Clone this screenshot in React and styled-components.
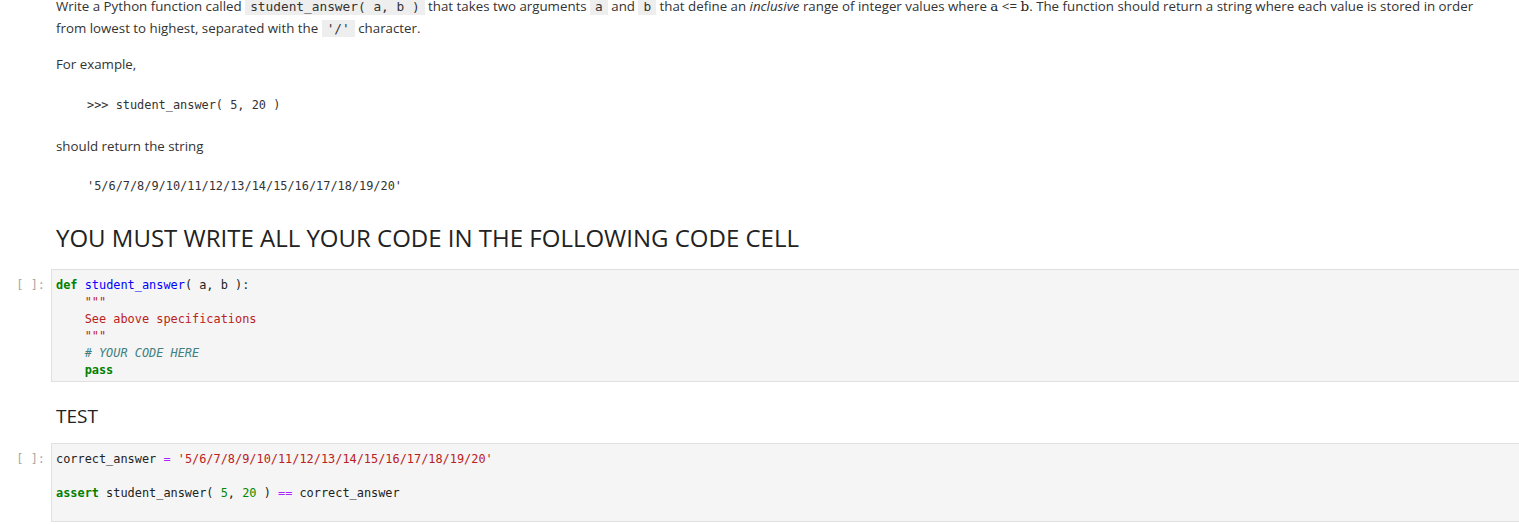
import React from 'react';
import styled, { createGlobalStyle } from 'styled-components';

const GlobalStyle = createGlobalStyle`
  html, body {
    margin: 0;
    padding: 0;
    background: #ffffff;
    overflow: hidden;
  }
`;

const Notebook = styled.div`
  width: 1560px;
  margin-top: -5px;
  font-family: "Open Sans", "Noto Sans", sans-serif;
  color: #333333;
`;

const Markdown = styled.div`
  width: 1440px;
  padding-left: 56px;
`;

const Para = styled.p`
  margin: ${props => props.top || 0}px 0 0 0;
  font-size: 13.3px;
  line-height: 22px;
`;

const InlineCode = styled.code`
  font-family: "DejaVu Sans Mono", monospace;
  font-size: 12.8px;
  line-height: 16px;
  background: #eeeeee;
  padding: 1px 5px;
  color: #333333;
`;

const MathVar = styled.span`
  font-family: "DejaVu Serif", serif;
  font-size: 13.5px;
  color: #222;
`;

const Pre = styled.pre`
  margin: ${props => props.top || 0}px 0 0 0;
  padding-left: 31px;
  font-family: "DejaVu Sans Mono", monospace;
  font-size: 11.9px;
  line-height: 17px;
  color: #333333;
`;

const Heading = styled.h2`
  margin: ${props => props.top || 0}px 0 0 56px;
  font-weight: 400;
  font-size: ${props => props.size}px;
  line-height: ${props => props.lh}px;
  color: #222222;
`;

const CellRow = styled.div`
  display: flex;
  margin-top: ${props => props.top || 0}px;
`;

const Prompt = styled.div`
  width: 51px;
  flex: none;
  box-sizing: border-box;
  padding: 8px 6px 0 0;
  text-align: right;
  font-family: "DejaVu Sans Mono", monospace;
  font-size: 11.9px;
  line-height: 17px;
  color: #a8a8a8;
  white-space: pre;
`;

const Input = styled.pre`
  flex: 1;
  margin: 0;
  padding: 7px 4px 2px 4px;
  background: #f5f5f5;
  border: 1px solid #e0e0e0;
  font-family: "DejaVu Sans Mono", monospace;
  font-size: 11.9px;
  line-height: 17px;
  color: #222222;
`;

const Kw = styled.span`
  color: #008000;
  font-weight: bold;
`;
const Def = styled.span`color: #0000ff;`;
const Str = styled.span`color: #ba2121;`;
const Comment = styled.span`
  color: #408080;
  font-style: italic;
`;
const Op = styled.span`color: #aa22ff;`;
const Num = styled.span`color: #008800;`;

export default function App() {
  return (
    <>
      <GlobalStyle />
      <Notebook>
        <Markdown>
          <Para>
            Write a Python function called <InlineCode>student_answer( a, b )</InlineCode> that takes two
            arguments <InlineCode>a</InlineCode> and <InlineCode>b</InlineCode> that define an <em>inclusive</em> range
            of integer values where <MathVar>a</MathVar> &lt;= <MathVar>b</MathVar>. The function should return a string
            where each value is stored in order from lowest to highest, separated with the{' '}
            <InlineCode>'/'</InlineCode> character.
          </Para>
          <Para top={14}>For example,</Para>
          <Pre top={22}>&gt;&gt;&gt; student_answer( 5, 20 )</Pre>
          <Para top={21}>should return the string</Para>
          <Pre top={21}>'5/6/7/8/9/10/11/12/13/14/15/16/17/18/19/20'</Pre>
        </Markdown>
        <Heading top={28} size={24} lh={30}>YOU MUST WRITE ALL YOUR CODE IN THE FOLLOWING CODE CELL</Heading>
        <CellRow top={16}>
          <Prompt>[ ]:</Prompt>
          <Input>
            <Kw>def</Kw> <Def>student_answer</Def>( a, b ):{'\n'}
            {'    '}<Str>"""</Str>{'\n'}
            {'    '}<Str>See above specifications</Str>{'\n'}
            {'    '}<Str>"""</Str>{'\n'}
            {'    '}<Comment># YOUR CODE HERE</Comment>{'\n'}
            {'    '}<Kw>pass</Kw>
          </Input>
        </CellRow>
        <Heading top={21} size={19} lh={26}>TEST</Heading>
        <CellRow top={14}>
          <Prompt>[ ]:</Prompt>
          <Input>
            correct_answer <Op>=</Op> <Str>'5/6/7/8/9/10/11/12/13/14/15/16/17/18/19/20'</Str>{'\n'}
            {'\n'}
            <Kw>assert</Kw> student_answer( <Num>5</Num>, <Num>20</Num> ) <Op>==</Op> correct_answer{'\n'}
            {' '}
          </Input>
        </CellRow>
      </Notebook>
    </>
  );
}
